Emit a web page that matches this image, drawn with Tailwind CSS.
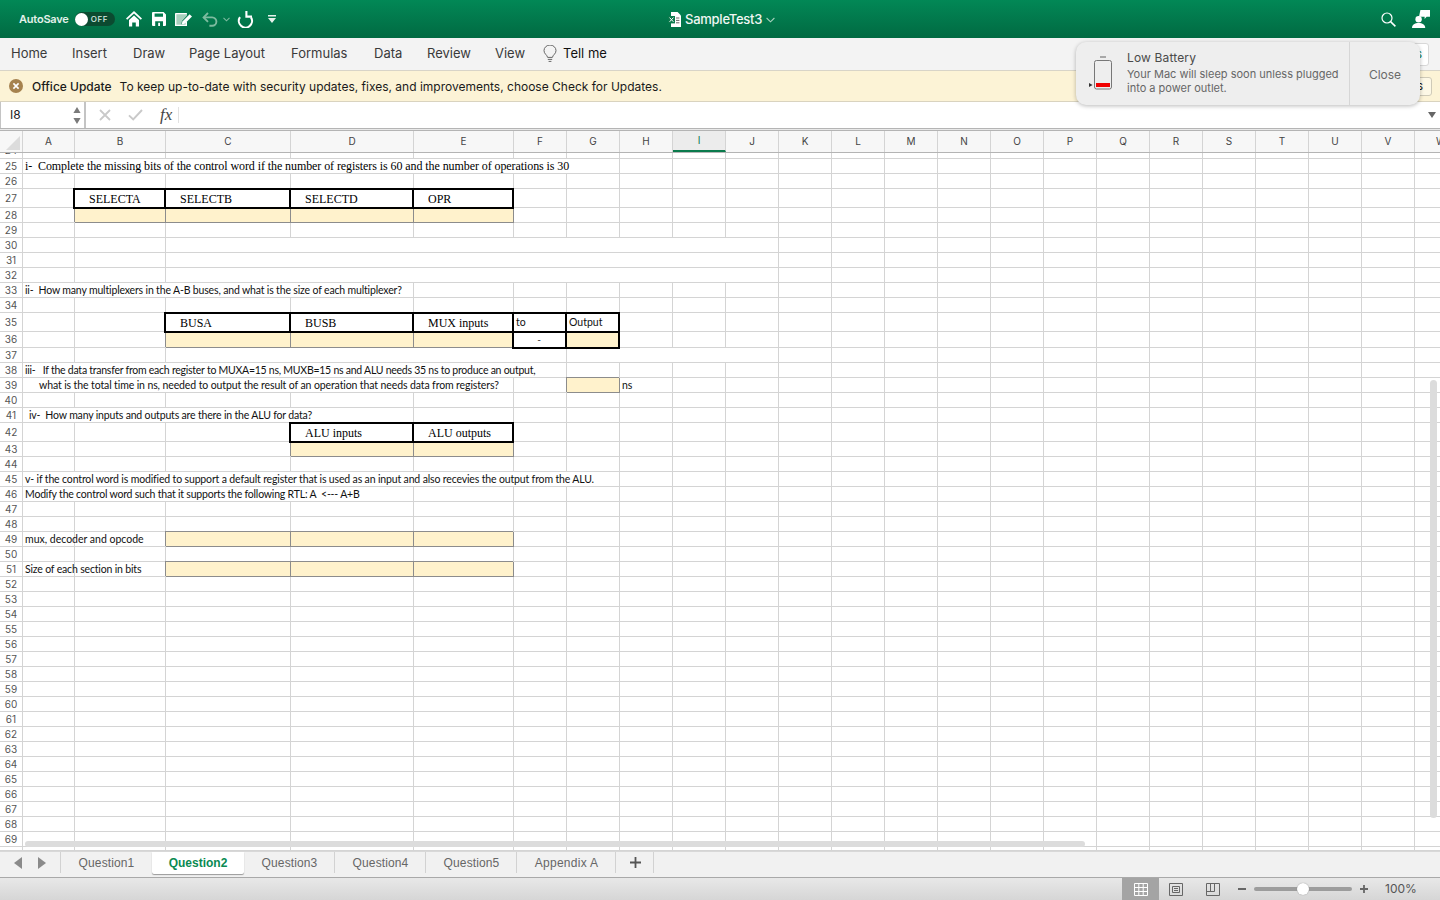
<!DOCTYPE html>
<html lang="en">
<head>
  <meta charset="UTF-8" />
  <title>SampleTest3</title>
  <script src="https://cdn.jsdelivr.net/npm/@tailwindcss/browser@4"></script>
</head>
<body class="relative w-[1440px] h-[900px] overflow-hidden flex flex-col bg-white font-['Inter',sans-serif] text-[#333]">

  <!-- title bar -->
  <div class="relative h-[38px] shrink-0 flex items-center bg-gradient-to-b from-[#028856] to-[#016a42] text-white">
    <span class="ml-[19px] text-[11px] font-semibold tracking-[-0.2px] text-[#e4f1ea]">AutoSave</span>
    <div class="ml-[6px] w-[40px] h-[14px] rounded-full bg-[#0b4a30] flex items-center">
      <span class="w-[13px] h-[13px] rounded-full bg-white"></span>
      <span class="ml-[3px] text-[8px] font-medium tracking-[0.6px] text-[#dcebe3]">OFF</span>
    </div>
    <svg class="ml-[11px]" width="16" height="16" viewBox="0 0 16 16" fill="#fff"><path d="M8 0l8 7.4-1.2 1.3L8 2.5 1.2 8.7 0 7.4z"/><path d="M3 9l5-4.5L13 9v6.6H9.8v-4H6.2v4H3z"/></svg>
    <svg class="ml-[10px]" width="14" height="14" viewBox="0 0 14 14" fill="#fff"><path fill-rule="evenodd" d="M1 0h10.6L14 2.4V13a1 1 0 0 1-1 1H1a1 1 0 0 1-1-1V1a1 1 0 0 1 1-1zm1.6 1.6v3.2h8.4V1.6zM3.2 9.2V14h7.8V9.2zm3 1.6h1.8V14H6.2z"/></svg>
    <svg class="ml-[8px]" width="19" height="16" viewBox="0 0 19 16"><path d="M1 2h12v2.6L8 10l-.7 3.4L11 12.6l2-2V15H1z" fill="#cfe6da" fill-opacity=".8"/><path d="M1.7 2.7h11M1.7 2.7V14.3h10.6V11" fill="none" stroke="#fff" stroke-width="1.3"/><path d="M8.4 10.4L15.6 3.2l2.4 2.4-7.2 7.2-3.2.8z" fill="#fff"/></svg>
    <svg class="ml-[9px]" width="17" height="15" viewBox="0 0 17 15" fill="none" stroke="#7dbb9f" stroke-width="1.9"><path d="M6 1L1.6 5.4 6 9.8"/><path d="M1.8 5.4h8.4a4.2 4.2 0 0 1 4.2 4.2 4.2 4.2 0 0 1-4.2 4.2H7.4"/></svg>
    <svg class="ml-[4px]" width="7" height="5" viewBox="0 0 7 5" fill="none" stroke="#7dbb9f" stroke-width="1.1"><path d="M.5.8l3 3 3-3"/></svg>
    <svg class="ml-[7px]" width="17" height="17" viewBox="0 0 17 17" fill="none" stroke="#fff" stroke-width="2.1"><path d="M3 6.2a6.6 6.6 0 1 0 11 .2"/><path d="M9.4 0v5.6h5.6"/></svg>
    <svg class="ml-[14px]" width="8" height="8" viewBox="0 0 8 8" fill="#e6f2ec"><path d="M0 0h8v1.4H0zM0 3h8L4 8z"/></svg>
    <div class="absolute left-[668px] top-0 h-[38px] flex items-center">
      <svg width="13" height="15" viewBox="0 0 13 15"><path d="M3 0h6.6L13 3.4V15H3z" fill="#fff"/><path d="M8 6h3.4M8 8.4h3.4M8 10.8h3.4" stroke="#555" stroke-width=".9"/><rect x="0" y="4" width="7" height="7.4" fill="#0a7a4c"/><path d="M1.6 5.6L5.4 9.8M5.4 5.6L1.6 9.8" stroke="#fff" stroke-width="1"/></svg>
      <span class="ml-[4px] pt-[1px] text-[13px] font-medium tracking-[-0.25px] text-[#f0f7f3]">SampleTest3</span>
      <svg class="ml-[4px] mt-[1px]" width="9" height="6" viewBox="0 0 9 6" fill="none" stroke="#a5d1bc" stroke-width="1.1"><path d="M.6 1l3.9 3.8L8.4 1"/></svg>
    </div>
    <svg class="ml-auto" width="15" height="15" viewBox="0 0 15 15" fill="none" stroke="#fff" stroke-width="1.2"><circle cx="6" cy="6" r="5"/><path d="M9.6 9.6l4.8 4.8" stroke-width="1.5"/></svg>
    <svg class="ml-[16px] mr-[10px]" width="18" height="18" viewBox="0 0 18 18" fill="#fff"><path d="M8.4 0H18v6.8h-3.4L12.6 9V6.8H7z"/><circle cx="6.6" cy="9.2" r="3.2"/><path d="M0 18c0-3.4 2.8-5 6.6-5s6.6 1.6 6.6 5z"/></svg>
  </div>

  <!-- ribbon tabs -->
  <div class="h-[33px] shrink-0 flex items-center bg-[#f3f3f3] border-b border-[#d8d4c8] pl-[11px] pr-[11px] text-[13px] text-[#3a3a3a]">
    <span class="w-[61px]">Home</span>
    <span class="w-[61px]">Insert</span>
    <span class="w-[56px]">Draw</span>
    <span class="w-[102px]">Page Layout</span>
    <span class="w-[83px]">Formulas</span>
    <span class="w-[53px]">Data</span>
    <span class="w-[68px]">Review</span>
    <span class="w-[48px]">View</span>
    <svg width="14" height="18" viewBox="0 0 14 18" fill="none" stroke="#666" stroke-width="1"><path d="M4.6 12.4C4.2 9.8 1 9 1 5.6a5.6 5.2 0 0 1 12 0c0 3.4-3.2 4.2-3.6 6.8z"/><path d="M4.8 14.4h4.4M5.6 16.4h2.8"/></svg>
    <span class="ml-[6px] text-[#111]">Tell me</span>
    <span class="ml-auto h-[23px] pl-[8px] pr-[6px] bg-white border border-[#d8d8d8] rounded-[3px] flex items-center text-[12px] text-[#0a7a4c]">Comments</span>
  </div>

  <!-- update bar -->
  <div class="h-[31px] shrink-0 flex items-center bg-[#fcf3d6] border-b border-[#d9d3bf] pl-[9px] pr-[8px] text-[12px] text-[#1a1a1a]">
    <svg width="14" height="14" viewBox="0 0 14 14"><circle cx="7" cy="7" r="7" fill="#a6824f"/><path d="M4.4 4.4l5.2 5.2M9.6 4.4l-5.2 5.2" stroke="#fff" stroke-width="1.6"/></svg>
    <span class="ml-[9px] pt-[1px] font-medium">Office Update</span>
    <span class="ml-[8px] pt-[1px]">To keep up-to-date with security updates, fixes, and improvements, choose Check for Updates.</span>
    <span class="ml-auto h-[19px] px-[8px] bg-[#fdf8e6] border border-[#cfcab8] rounded-[3px] flex items-center text-[12px]">Check for Updates</span>
  </div>

  <!-- formula bar -->
  <div class="h-[26px] shrink-0 flex items-center bg-white">
    <div class="relative w-[86px] h-full shrink-0 flex items-center border-r-2 border-l border-[#c4c4c4] pl-[9px] text-[12px] text-[#222]">
      I8
      <svg class="absolute left-[72px] top-[5px]" width="8" height="17" viewBox="0 0 8 17" fill="#7a7a7a"><path d="M4 0l3.6 6H.4zM4 17l3.6-6H.4z"/></svg>
    </div>
    <svg class="ml-[13px]" width="12" height="12" viewBox="0 0 12 12" stroke="#c9c9c9" stroke-width="1.8"><path d="M1 1l10 10M11 1L1 11"/></svg>
    <svg class="ml-[17px]" width="15" height="12" viewBox="0 0 15 12" fill="none" stroke="#c9c9c9" stroke-width="1.9"><path d="M1 6.4l4.2 4L14 1"/></svg>
    <span class="ml-[17px] font-['Liberation_Serif'] italic text-[17px] text-[#444]">fx</span>
    <span class="ml-[6px] w-px h-[16px] bg-[#e2e2e2]"></span>
    <svg class="ml-auto mr-[4px]" width="8" height="6" viewBox="0 0 8 6" fill="#666"><path d="M0 0h8L4 6z"/></svg>
  </div>
  <div class="h-[3px] shrink-0 border-y border-[#b4b4b4] bg-[#e9e9e9]"></div>

  <!-- column headers -->
  <div id="headers" class="h-[22px] shrink-0 grid grid-cols-[23px_52px_91px_125px_123px_100px_repeat(18,53px)] bg-[#f7f7f7] border-b border-[#b4b4b4] overflow-hidden text-[10px] text-[#444]"></div>

  <!-- sheet -->
  <div class="relative flex-1 overflow-hidden">
    <div id="sheet" class="grid grid-cols-[23px_52px_91px_125px_123px_100px_repeat(18,53px)] overflow-hidden"></div>
    <div class="absolute left-[25px] top-[688px] w-[1060px] h-[6px] rounded-full bg-[#dcdcdc]"></div>
    <div class="absolute left-[1430px] top-[227px] w-[7px] h-[438px] rounded-full bg-[#dcdcdc]"></div>
  </div>

  <!-- sheet tabs -->
  <div class="h-[27px] shrink-0 flex items-start bg-[#f1f1f1] border-t border-[#d8d8d8] border-b border-b-[#a9a9a9] font-['Liberation_Sans'] text-[12px] tracking-[0.12px] text-[#666]">
    <div class="w-[61px] h-[21px] flex items-center pl-[14px] gap-[14px] border-r border-[#d2d2d2]">
      <svg width="9" height="12" viewBox="0 0 9 12" fill="#8a8a8a"><path d="M8 0v12L0 6z"/></svg>
      <svg width="9" height="12" viewBox="0 0 9 12" fill="#8a8a8a"><path d="M1 0v12l8-6z"/></svg>
    </div>
    <div class="w-[91px] h-[21px] flex items-center justify-center">Question1</div>
    <div class="w-[92px] h-[22px] flex items-center justify-center bg-white rounded-b-[2px] shadow-[0_1px_1px_#9a9a9a] font-bold tracking-normal text-[#0a8a52]">Question2</div>
    <div class="w-[91px] h-[21px] flex items-center justify-center pl-[1px] border-r border-[#d2d2d2]">Question3</div>
    <div class="w-[91px] h-[21px] flex items-center justify-center pl-[1px] border-r border-[#d2d2d2]">Question4</div>
    <div class="w-[91px] h-[21px] flex items-center justify-center pl-[1px] border-r border-[#d2d2d2]">Question5</div>
    <div class="w-[99px] h-[21px] flex items-center justify-center pl-[1px] border-r border-[#d2d2d2] tracking-[0.3px]">Appendix A</div>
    <div class="w-[38px] h-[21px] flex items-center justify-center pl-[2px] border-r border-[#d2d2d2]">
      <svg width="11" height="11" viewBox="0 0 11 11" stroke="#555" stroke-width="1.8"><path d="M5.5 0v11M0 5.5h11"/></svg>
    </div>
  </div>

  <!-- status bar -->
  <div class="h-[22px] shrink-0 flex items-center justify-end bg-gradient-to-b from-[#e8e8e8] to-[#d6d6d6] text-[12px] text-[#555]">
    <div class="w-[37px] h-full flex items-center justify-center bg-[#a4a4a4]">
      <svg width="14" height="13" viewBox="0 0 14 13" fill="none" stroke="#fff" stroke-width="1"><path d="M.5.5h13v12H.5zM.5 4.5h13M.5 8.5h13M4.8.5v12M9.2.5v12"/></svg>
    </div>
    <svg class="ml-[10px]" width="14" height="13" viewBox="0 0 14 13" fill="none" stroke="#666" stroke-width="1"><path d="M.5.5h13v12H.5zM3.5 3.5h7v6h-7zM5 5.5h4M5 7.5h4"/></svg>
    <svg class="ml-[23px]" width="14" height="13" viewBox="0 0 14 13" fill="none" stroke="#666" stroke-width="1"><path d="M.5.5v12h13V.5zM.5 8.5h8M8.5.5v8M4.5.5v8"/></svg>
    <svg class="ml-[18px]" width="8" height="2" viewBox="0 0 8 2" fill="#666"><path d="M0 0h8v2H0z"/></svg>
    <div class="relative ml-[8px] w-[98px] h-[4px] rounded-full bg-[#9c9c9c]">
      <span class="absolute left-[43px] top-[-4px] w-[12px] h-[12px] rounded-full bg-white shadow-[0_0_1px_#777]"></span>
    </div>
    <svg class="ml-[8px]" width="8" height="8" viewBox="0 0 8 8" stroke="#666" stroke-width="1.8"><path d="M4 0v8M0 4h8"/></svg>
    <span class="ml-[17px] mr-[24px] w-[31px]">100%</span>
  </div>

  <!-- low battery notification -->
  <div class="absolute left-[1076px] top-[42px] w-[344px] h-[63px] flex rounded-[10px] bg-[#eeeeee] shadow-[0_1px_4px_rgba(0,0,0,0.28)]">
    <svg class="ml-[13px] mt-[14px]" width="24" height="34" viewBox="0 0 24 34" fill="none"><path d="M11 1h6" stroke="#8a8a8a" stroke-width="1.4"/><rect x="5.5" y="4.5" width="17" height="28.5" rx="2" stroke="#777"/><rect x="7" y="27" width="14" height="4" fill="#f00000"/><path d="M0 27l3.6 2-3.6 2z" fill="#333"/></svg>
    <div class="ml-[14px] w-[222px] pt-[7px] text-[11px] leading-[14px] text-[#666]">
      <div class="text-[12px] leading-[18px] tracking-[0.15px] text-[#4a4a4a]">Low Battery</div>
      <div>Your Mac will sleep soon unless plugged</div>
      <div>into a power outlet.</div>
    </div>
    <div class="flex-1 flex items-center justify-center pt-[2px] border-l border-[#d6d6d6] text-[12px] text-[#6a6a6a]">Close</div>
  </div>

<script>
  const letters = 'ABCDEFGHIJKLMNOPQRSTUVW'.split('');

  // row heights that differ from the default 15
  const heights = { 24: 6, 27: 19, 35: 19, 36: 16, 42: 19, 70: 4 };

  // merged blocks: row -> [[first column, span], ...]
  const merges = {
    25: [[0, 7]],
    30: [[2, 8]], 31: [[2, 8]], 32: [[2, 8]],
    33: [[0, 4]],
    37: [[2, 4], [6, 4]],
    38: [[0, 6]],
    39: [[0, 5]],
    41: [[0, 4]],
    45: [[0, 7]],
    46: [[0, 4]],
  };

  // boxed header cells sit 1px left of their column, so the left padding gets that 1px back
  const serif = "font-['Liberation_Serif'] text-[12px] text-black pl-[15px] pt-[1px]";
  const boxed = "font-['Lato'] text-[10.5px] text-[#111] pl-[3px] pt-[2px]";
  const lato = "font-['Lato'] text-[10.5px] text-[#111] pl-[2px] pt-[1px]";

  const texts = {
    '25A': ['i-  Complete the missing bits of the control word if the number of registers is 60 and the number of operations is 30', "font-['Liberation_Serif'] text-[12px] tracking-[-0.08px] text-black pl-[2px]"],
    '27B': ['SELECTA', serif], '27C': ['SELECTB', serif], '27D': ['SELECTD', serif], '27E': ['OPR', serif],
    '33A': ['ii-  How many multiplexers in the A-B buses, and what is the size of each multiplexer?', lato + ' tracking-[-0.16px]'],
    '35C': ['BUSA', serif], '35D': ['BUSB', serif], '35E': ['MUX inputs', serif],
    '35F': ['to', boxed], '35G': ['Output', boxed],
    '36F': ['-', "font-['Lato'] text-[10px] text-[#222] justify-center"],
    '38A': ['iii-   If the data transfer from each register to MUXA=15 ns, MUXB=15 ns and ALU needs 35 ns to produce an output,', lato + ' tracking-[-0.25px]'],
    '39A': ['what is the total time in ns, needed to output the result of an operation that needs data from registers?', "font-['Lato'] text-[10.5px] text-[#111] pl-[16px] pt-[1px] tracking-[-0.11px]"],
    '39H': ['ns', lato],
    '41A': ['iv-  How many inputs and outputs are there in the ALU for data?', "font-['Lato'] text-[10.5px] text-[#111] pl-[6px] pt-[1px] tracking-[-0.17px]"],
    '42D': ['ALU inputs', serif], '42E': ['ALU outputs', serif],
    '45A': ['v- if the control word is modified to support a default register that is used as an input and also recevies the output from the ALU.', lato + ' tracking-[-0.15px]'],
    '46A': ['Modify the control word such that it supports the following RTL: A  <--- A+B', lato + ' tracking-[-0.2px]'],
    '49A': ['mux, decoder and opcode', lato],
    '51A': ['Size of each section in bits', lato + ' tracking-[-0.17px]'],
  };

  const thick = ['27B', '27C', '27D', '27E', '35C', '35D', '35E', '35F', '35G', '36F', '36G', '42D', '42E'];
  const yellow = ['28B', '28C', '28D', '28E', '36C', '36D', '36E', '36G', '39G', '43D', '43E', '49C', '49D', '49E', '51C', '51D', '51E'];

  function makeCell(cls, text) {
    const div = document.createElement('div');
    div.className = cls;
    if (text) div.textContent = text;
    return div;
  }

  // column headers
  const headers = document.getElementById('headers');
  const corner = makeCell('border-r border-[#d4d4d4] flex items-end justify-end pr-[2px] pb-[2px]');
  corner.innerHTML = '<svg width="14" height="14" viewBox="0 0 14 14"><path d="M14 0v14H0z" fill="#dcdcdc"/></svg>';
  headers.appendChild(corner);
  letters.forEach(l => {
    const selected = l === 'I';
    headers.appendChild(makeCell(selected
      ? 'flex items-center justify-center border-r border-[#d4d4d4] bg-[#ececec] border-b-2 border-b-[#0a7a4c] text-[#0a7a4c]'
      : 'flex items-center justify-center border-r border-[#d4d4d4]', l));
  });

  // sheet body
  const sheet = document.getElementById('sheet');
  const rowSizes = [];
  for (let r = 24; r <= 70; r++) {
    rowSizes.push((heights[r] || 15) + 'px');
    const align = r === 24 ? 'items-end' : r === 70 ? 'items-start' : 'items-center';
    sheet.appendChild(makeCell('flex justify-center overflow-hidden border-r border-b border-[#d4d4d4] leading-[15px] text-[10px] text-[#555] ' + align, String(r)));

    const blocks = merges[r] || [];
    for (let c = 0; c < letters.length; c++) {
      const key = r + letters[c];
      const block = blocks.find(b => b[0] === c);
      const span = block ? block[1] : 1;
      let cls = 'flex items-center whitespace-pre min-w-0 border-r border-b ';
      if (yellow.includes(key)) cls += 'relative z-[1] bg-[#fff2cc] border-[#8c8c8c] shadow-[-1px_-1px_0_#8c8c8c] ';
      else cls += 'border-[#d4d4d4] ';
      if (thick.includes(key)) cls += 'relative z-10 -ml-px mr-px outline-2 outline-black -outline-offset-1 ';
      const t = texts[key];
      if (t) cls += t[1];
      const cell = makeCell(cls, t ? t[0] : '');
      if (span > 1) cell.style.gridColumn = 'span ' + span;
      sheet.appendChild(cell);
      c += span - 1;
    }
  }
  sheet.style.gridTemplateRows = rowSizes.join(' ');
</script>
</body>
</html>
